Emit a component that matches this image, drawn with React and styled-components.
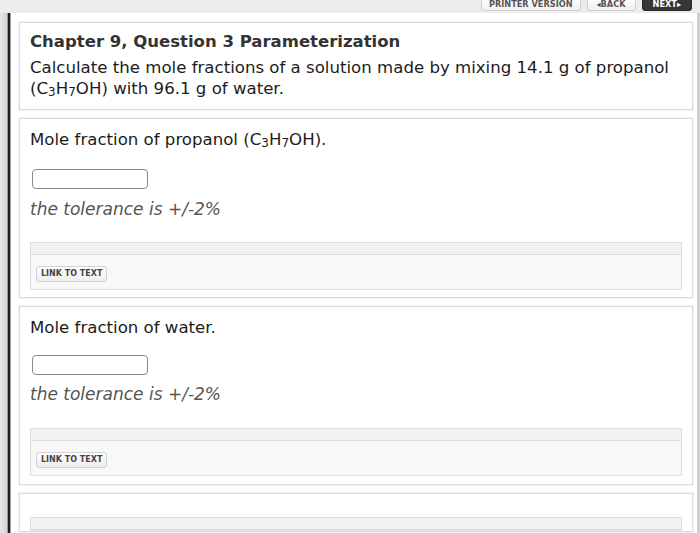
import React from 'react';
import styled, { createGlobalStyle } from 'styled-components';

const GlobalStyle = createGlobalStyle`
  html, body {
    margin: 0;
    padding: 0;
    background: #ffffff;
    font-family: "DejaVu Sans", Verdana, sans-serif;
    color: #222;
  }
`

const Page = styled.div`
  width: 700px;
  height: 533px;
  overflow: hidden;
  display: flex;
  flex-direction: column;
`

const TopBar = styled.div`
  height: 13px;
  box-sizing: border-box;
  flex: none;
  background: #ececec;
  display: flex;
  justify-content: flex-end;
  align-items: flex-end;
  gap: 6px;
  padding: 0 8px 2px 0;
  overflow: hidden;
`

const TopButton = styled.div`
  height: 15px;
  box-sizing: border-box;
  padding: 0 ${p => p.pad}px;
  display: flex;
  align-items: center;
  border: 1px solid ${p => (p.dark ? '#2a2a2a' : '#cfcfcf')};
  border-radius: 3px;
  background: ${p => (p.dark ? '#363636' : 'linear-gradient(#ffffff, #f1f1f1)')};
  color: ${p => (p.dark ? '#ffffff' : '#555')};
  font-size: 8.2px;
  font-weight: bold;
  white-space: nowrap;
`

const Body = styled.div`
  flex: 1;
  display: flex;
  min-height: 0;
`

const Gutter = styled.div`
  width: 7px;
  flex: none;
  background: linear-gradient(90deg, #e6e6e6, #d4d4d4);
`

const Rule = styled.div`
  width: 4px;
  flex: none;
  background: linear-gradient(90deg, #9a9a9a 0 1px, #1e1e1e 1px 3px, #a0a0a0 3px);
`

const Content = styled.div`
  flex: 1;
  padding: 9px 4px 0 8px;
  display: flex;
  flex-direction: column;
  gap: 8px;
  border-right: 3px solid #cfcfcf;
`

const Card = styled.div`
  flex: none;
  border: 1px solid #dcdcdc;
  box-shadow: 0 0 0 1px #f3f3f3;
  background: #fff;
  padding: ${p => p.pad};
`

const Title = styled.div`
  font-size: 16.5px;
  font-weight: bold;
  color: #333;
  line-height: 22px;
`

const Text = styled.div`
  font-size: 16.6px;
  line-height: 21px;
  color: #1c1c1c;
  margin-top: ${p => p.mt || 0}px;
`

const Sub = styled.span`
  font-size: 12px;
  line-height: 0;
  vertical-align: -2px;
`

const Answer = styled.input`
  display: block;
  width: 116px;
  height: 20px;
  box-sizing: border-box;
  margin: ${p => p.mt}px 0 0 2px;
  border: 1px solid #8a8a8a;
  border-radius: 4px;
  background: #fff;
  outline: none;
  padding: 0 4px;
`

const Tolerance = styled.div`
  font-size: 17px;
  font-style: italic;
  color: #555;
  line-height: 21px;
  margin-top: ${p => p.mt}px;
`

const Resources = styled.div`
  margin-top: ${p => p.mt}px;
  border: 1px solid #dedede;
  background: #f8f8f8;
`

const ResourcesHead = styled.div`
  height: 11px;
  background: #f2f2f2;
  border-bottom: 1px solid #dcdcdc;
`

const ResourcesBody = styled.div`
  padding: 6px 5px 12px;
  height: 16px;
`

const LinkButton = styled.div`
  display: inline-flex;
  align-items: center;
  height: 16px;
  padding: 0 4px;
  box-sizing: border-box;
  border: 1px solid #d2d2d2;
  border-radius: 3px;
  background: linear-gradient(#ffffff, #eeeeee);
  font-size: 8px;
  font-weight: bold;
  color: #444;
`

function Formula() {
  return (
    <>C<Sub>3</Sub>H<Sub>7</Sub>OH</>
  )
}

function Part({ prompt, inputTop, tolTop, resTop, bottom }) {
  return (
    <Card pad={`10px 10px ${bottom}px`}>
      <Text>{prompt}</Text>
      <Answer mt={inputTop} aria-label="answer" />
      <Tolerance mt={tolTop}>the tolerance is +/-2%</Tolerance>
      <Resources mt={resTop}>
        <ResourcesHead />
        <ResourcesBody>
          <LinkButton>LINK TO TEXT</LinkButton>
        </ResourcesBody>
      </Resources>
    </Card>
  )
}

export default function App() {
  return (
    <Page>
      <GlobalStyle />
      <TopBar>
        <TopButton pad={7}>PRINTER VERSION</TopButton>
        <TopButton pad={9}>◂BACK</TopButton>
        <TopButton pad={10} dark>NEXT▸</TopButton>
      </TopBar>
      <Body>
        <Gutter />
        <Rule />
        <Content>
          <Card pad="8px 10px 10px">
            <Title>Chapter 9, Question 3 Parameterization</Title>
            <Text mt={4}>
              Calculate the mole fractions of a solution made by mixing 14.1 g of propanol (<Formula />) with 96.1 g of water.
            </Text>
          </Card>
          <Part prompt={<>Mole fraction of propanol (<Formula />).</>} inputTop={19} tolTop={10} resTop={22} bottom={7} />
          <Part prompt="Mole fraction of water." inputTop={17} tolTop={9} resTop={23} bottom={8} />
          <Card pad="23px 10px 0">
            <Resources mt={0}>
              <ResourcesHead />
            </Resources>
          </Card>
        </Content>
      </Body>
    </Page>
  )
}
